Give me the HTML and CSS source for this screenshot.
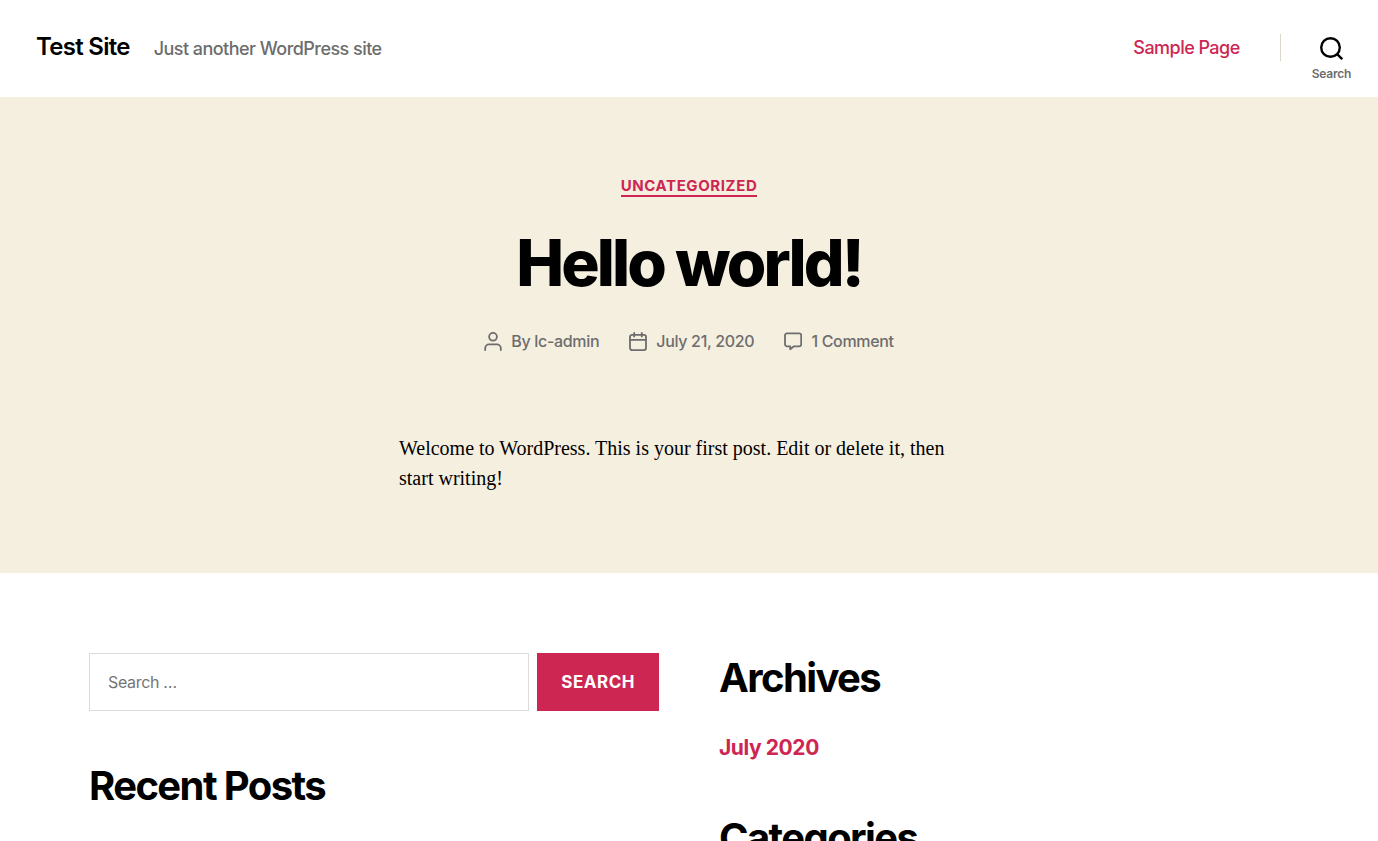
FILE: index.html
```
<!DOCTYPE html>
<html lang="en">
<head>
    <meta charset="UTF-8">
    <meta name="viewport" content="width=device-width, initial-scale=1.0">
    <title>Test Site</title>
    <link rel="stylesheet" href="styles.css">
</head>
<body>
    <header class="site-header">
        <div class="header-titles">
            <a class="site-title" href="#">Test Site</a>
            <span class="site-description">Just another WordPress site</span>
        </div>
        <nav class="header-nav">
            <a class="menu-link" href="#">Sample Page</a>
            <span class="divider"></span>
            <button class="search-toggle" type="button">
                <svg width="23" height="23" viewBox="0 0 23 23" fill="none" stroke="#000" stroke-width="2.4">
                    <circle cx="10.5" cy="10.5" r="9.3"/>
                    <path d="M16.9 16.9L22.2 22.2"/>
                </svg>
                <span>Search</span>
            </button>
        </nav>
    </header>

    <main>
        <article class="post">
            <header class="entry-header">
                <a class="category" href="#">Uncategorized</a>
                <h1>Hello world!</h1>
                <ul class="post-meta">
                    <li>
                        <svg width="18" height="19" viewBox="0 0 18 19" fill="none" stroke="currentColor" stroke-width="1.8" stroke-linecap="round">
                            <circle cx="9" cy="4.8" r="3.9"/>
                            <path d="M1.2 18v-1.8a3.8 3.8 0 0 1 3.8-3.8h8a3.8 3.8 0 0 1 3.8 3.8V18"/>
                        </svg>
                        <span>By <a href="#">lc-admin</a></span>
                    </li>
                    <li>
                        <svg width="18" height="19" viewBox="0 0 18 19" fill="none" stroke="currentColor" stroke-width="1.8" stroke-linecap="round">
                            <rect x="1" y="2.8" width="16" height="15.3" rx="2"/>
                            <path d="M1 7.9h16M5.2 0.9v3.6M12.8 0.9v3.6"/>
                        </svg>
                        <a href="#">July 21, 2020</a>
                    </li>
                    <li>
                        <svg width="18" height="19" viewBox="0 0 18 19" fill="none" stroke="currentColor" stroke-width="1.8" stroke-linejoin="round">
                            <path d="M3 1.3h12.2a2 2 0 0 1 2 2v9a2 2 0 0 1-2 2H10L6.2 17.3v-3H3a2 2 0 0 1-2-2v-9a2 2 0 0 1 2-2z"/>
                        </svg>
                        <a href="#">1 Comment</a>
                    </li>
                </ul>
            </header>
            <div class="entry-content">
                <p>Welcome to WordPress. This is your first post. Edit or delete it, then start writing!</p>
            </div>
        </article>
    </main>

    <div class="footer-widgets">
        <div class="widget-column">
            <form class="search-form">
                <input type="search" placeholder="Search …" aria-label="Search for">
                <button type="submit">Search</button>
            </form>
            <section class="widget">
                <h2>Recent Posts</h2>
            </section>
        </div>
        <div class="widget-column">
            <section class="widget">
                <h2>Archives</h2>
                <ul>
                    <li><a href="#">July 2020</a></li>
                </ul>
            </section>
            <section class="widget">
                <h2>Categories</h2>
            </section>
        </div>
    </div>
</body>
</html>
```
FILE: styles.css
```
* {
    box-sizing: border-box;
}
body {
    margin: 0;
    height: 100vh;
    overflow: hidden;
    background: #fff;
    color: #000;
    font-family: Inter, "Liberation Sans", sans-serif;
    font-size: 18px;
}
a {
    color: #cd2653;
    text-decoration: none;
}
h1, h2, p, ul {
    margin: 0;
    padding: 0;
}
ul {
    list-style: none;
}
.site-header {
    display: flex;
    justify-content: space-between;
    align-items: flex-start;
    padding: 34px 27px 16px 36px;
}
.header-titles {
    display: flex;
    align-items: baseline;
    gap: 24px;
}
.site-title {
    color: #000;
    font-size: 24px;
    font-weight: 600;
    line-height: 26px;
    letter-spacing: -0.03em;
}
.site-description {
    color: #6d6d6d;
    font-weight: 500;
    line-height: 24px;
    letter-spacing: -0.03em;
}
.header-nav {
    display: flex;
    align-items: flex-start;
}
.menu-link {
    font-weight: 500;
    line-height: 28px;
    letter-spacing: -0.03em;
}
.divider {
    width: 1px;
    height: 27px;
    margin: 0 31px 0 40px;
    background: #dcd7ca;
}
.search-toggle {
    display: flex;
    flex-direction: column;
    align-items: center;
    gap: 6px;
    padding: 3px 0 0;
    border: none;
    background: none;
    color: #6d6d6d;
    font-family: inherit;
    font-size: 12px;
    font-weight: 600;
    line-height: 15px;
    letter-spacing: -0.02em;
    cursor: pointer;
}
.post {
    padding: 80px 20px;
    background: #f5efe0;
}
.entry-header {
    display: flex;
    flex-direction: column;
    align-items: center;
    text-align: center;
}
.category {
    border-bottom: 2px solid #cd2653;
    font-size: 15px;
    font-weight: 700;
    line-height: 18px;
    letter-spacing: 0.04em;
    text-transform: uppercase;
}
h1 {
    margin-top: 30px;
    font-size: 64px;
    font-weight: 800;
    line-height: 72px;
    letter-spacing: -0.045em;
}
.post-meta {
    display: flex;
    gap: 30px;
    margin-top: 32px;
    color: #6d6d6d;
    font-size: 16px;
    font-weight: 500;
    line-height: 20px;
}
.post-meta li {
    display: flex;
    align-items: center;
    gap: 9px;
    letter-spacing: -0.02em;
}
.post-meta a {
    color: inherit;
}
.entry-content {
    max-width: 580px;
    margin: 82px auto 0;
    font-family: Garamond, "Liberation Serif", serif;
    font-size: 20px;
    line-height: 30px;
}
.footer-widgets {
    display: grid;
    grid-template-columns: 1fr 1fr;
    gap: 60px;
    max-width: 1200px;
    margin: 0 auto;
    padding: 80px 0 0;
}
.search-form {
    display: flex;
    gap: 8px;
    margin-bottom: 50px;
}
.search-form input {
    flex: 1;
    min-width: 0;
    height: 58px;
    padding: 0 18px;
    border: 1px solid #dcdcdc;
    border-radius: 0;
    font-family: inherit;
    font-size: 16px;
    letter-spacing: -0.02em;
}
.search-form input::placeholder {
    color: #757575;
}
.search-form button {
    padding: 0 24px;
    border: none;
    background: #cd2653;
    color: #fff;
    font-family: inherit;
    font-size: 17px;
    font-weight: 700;
    letter-spacing: 0.03em;
    text-transform: uppercase;
    cursor: pointer;
}
.widget {
    margin-bottom: 50px;
}
.widget h2 {
    font-size: 40px;
    font-weight: 700;
    line-height: 50px;
    letter-spacing: -0.04em;
}
.widget ul {
    margin-top: 30px;
    font-size: 21px;
    font-weight: 700;
    line-height: 30px;
    letter-spacing: -0.02em;
}
```
